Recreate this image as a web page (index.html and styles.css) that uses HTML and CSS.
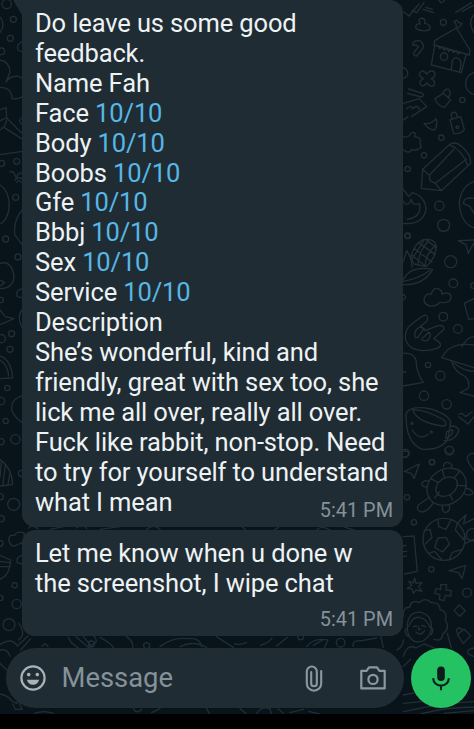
FILE: index.html
```html
<!DOCTYPE html>
<html lang="en">
<head>
<meta charset="utf-8">
<title>Chat</title>
<link rel="stylesheet" href="styles.css">
</head>
<body>
<div class="screen">
  <svg class="doodles" viewBox="0 0 474 714" aria-hidden="true">
    <g transform="translate(394 0) scale(.3333)">
      <path d="M30 36L45 48L75 12M54 30L68 38L90 8M88 28L118 38M95 22L115 28M135 0Q142 16 152 0M185 38L232 8M205 34L238 16"/>
      <path d="M66 86Q62 70 78 72Q70 56 84 54Q96 58 92 70Q110 72 108 88Q90 98 66 86Z"/>
      <circle cx="148" cy="67" r="9"/>
      <path d="M187 84L122 122L120 135L226 165L228 150ZM187 84L186 72Q175 62 184 64Q188 55 194 68Q210 68 200 76L192 84M122 138L112 195L202 218L216 165M132 137l5 9 8-6 5 10 9-6 5 10 9-6 5 10 9-6 5 10 9-6M172 207L175 182Q184 165 198 180Q204 190 197 214"/>
      <circle cx="150" cy="170" r="11"/>
      <path d="M56 134Q58 120 75 122Q90 128 88 143L68 168Q55 168 61 156L74 140Q65 132 57 136Z"/>
      <path d="M78 218Q86 206 98 222Q112 205 122 218Q126 230 112 236Q128 246 119 257Q109 263 99 249Q87 264 78 253Q76 242 88 236Q72 228 78 218Z"/>
      <path d="M28 203Q48 212 38 230L28 235M44 267L86 280Q92 288 82 291L40 280M28 310L76 296L98 320L52 350M38 326Q52 312 56 326Q72 312 76 328M28 360L42 350"/>
      <path d="M123 296L148 280L170 300L151 322Q130 318 123 296ZM146 280Q152 266 164 268Q174 280 163 292"/>
      <circle cx="205" cy="300" r="8"/><path d="M240 218Q210 228 216 262Q224 280 240 284"/>
      <path d="M90 370Q110 375 126 356Q132 374 122 390Q105 390 90 370ZM168 360L200 350L211 388Q200 404 179 400ZM174 354L171 343Q178 332 187 340L190 351"/>
      <circle cx="190" cy="382" r="4"/><circle cx="142" cy="413" r="8"/>
      <path d="M28 410Q40 414 46 406Q56 392 64 400L62 410Q84 412 78 430L82 442Q60 455 52 448Q48 464 28 450"/>
      <path d="M82 565L86 508L166 434Q184 422 204 440Q232 464 230 490L142 572ZM86 508L106 526L108 542L124 550L142 572M106 526L180 448M124 550L217 478M166 434Q206 450 222 498"/>
      <circle cx="90" cy="466" r="8"/><circle cx="41" cy="507" r="8"/>
      <path d="M28 568L44 590L55 578Q94 590 96 628Q88 674 28 671M28 604Q40 625 52 598Q55 620 76 610Q86 650 40 658"/>
      <circle cx="136" cy="617" r="14"/><circle cx="149" cy="676" r="18"/><circle cx="41" cy="707" r="8"/>
      <path d="M240 545Q200 560 196 610Q200 670 240 684M240 595Q210 590 208 610L228 620L240 640M240 45Q220 65 240 98"/>
    </g>
    <g transform="translate(394 230) scale(.3333)">
      <circle cx="41" cy="18" r="8"/><path d="M136 0Q148 8 162 0"/>
      <path d="M50 84Q58 42 88 29Q120 24 127 46Q126 84 96 110L60 102ZM60 55L114 96M74 38L124 74M92 28L128 52M52 74L92 106M72 104Q75 60 108 28M94 106Q92 76 126 44M54 88L90 30M28 94L38 62Q55 85 54 112M28 148Q50 105 116 118Q90 165 28 164M28 154Q75 145 106 122"/>
      <circle cx="170" cy="95" r="18"/><path d="M193 32L240 30M193 32L216 44L223 70L240 38"/>
      <circle cx="178" cy="160" r="13"/><circle cx="238" cy="167" r="8"/><path d="M28 193Q42 202 28 210"/>
      <path d="M108 228Q86 222 91 204Q98 188 112 193Q116 172 132 176Q146 182 143 192Q170 184 171 202Q170 218 150 218Q132 215 132 223Q118 230 108 228ZM240 206L211 220L224 268L240 266"/>
      <circle cx="148" cy="260" r="13"/><circle cx="192" cy="297" r="13"/>
      <path d="M46 289Q80 260 94 255Q108 264 95 277L78 290Q90 292 94 302L132 287Q151 284 150 298L119 326Q144 338 139 348Q130 360 88 362Q42 360 34 325Q34 300 46 289ZM63 315Q60 302 76 292Q90 290 86 302L72 322Q60 326 63 315ZM86 324L105 306Q114 318 102 330Q92 336 82 328"/>
      <path d="M28 370Q56 366 66 390Q67 430 88 457L28 468M28 426L36 426"/>
      <circle cx="102" cy="405" r="8"/><circle cx="139" cy="437" r="14"/><circle cx="90" cy="497" r="14"/><circle cx="158" cy="523" r="14"/>
      <path d="M240 345Q168 334 143 383L240 413M204 350Q220 320 240 320M172 392Q180 425 214 440Q230 456 222 476L198 488L240 498M180 400Q210 424 240 424M195 553L204 550L215 560L234 546M195 560L222 582L240 560"/>
      <path d="M36 550Q52 525 110 537Q166 555 170 578L162 626Q145 660 85 658Q34 640 36 550ZM56 540Q90 536 150 570Q164 588 146 588Q70 578 56 540ZM168 588Q196 588 194 604Q182 634 150 632M176 600L158 605L155 624Q176 620 176 600ZM55 600Q76 634 103 613"/>
      <circle cx="54" cy="580" r="3"/><circle cx="112" cy="606" r="3"/><circle cx="34" cy="670" r="12"/><circle cx="166" cy="662" r="13"/><circle cx="114" cy="696" r="8"/>
    </g>
    <g transform="translate(394 450) scale(.3333)">
      <circle cx="114" cy="37" r="8"/><circle cx="39" cy="142" r="8"/><path d="M31 64L76 42L60 86L52 70ZM28 4Q45 0 44 14Q38 24 28 22M152 0Q166 24 180 0M240 10Q210 12 225 40L240 62"/>
      <ellipse cx="158" cy="110" rx="62" ry="52" transform="rotate(-35 158 110)"/><ellipse cx="158" cy="110" rx="35" ry="26" transform="rotate(-35 158 110)"/>
      <path d="M110 85L132 98M145 60L152 84M198 62L180 85M216 108L190 106M176 150L168 134M122 144L136 126M148 50Q150 34 164 38Q178 44 172 54M100 112Q80 110 84 98Q94 88 106 94M214 114Q238 118 236 132Q222 140 208 130M146 166Q142 184 154 188Q170 184 166 166M106 142L72 166Q66 184 84 186Q104 184 118 158"/>
      <circle cx="60" cy="217" r="8"/><circle cx="150" cy="268" r="63"/>
      <path d="M132 264L156 262L166 282L146 306L122 292ZM132 208L134 230L156 238L172 208M90 242L108 238L114 262L94 282M103 310L122 304L144 330M166 328L174 308L204 298M190 220L184 240L210 270L212 250M190 220L216 194L208 222L240 206M240 235Q214 235 218 264Q225 274 240 272M214 280L240 268"/>
      <path d="M28 260L60 258L70 364L32 372M28 288L36 286M28 305L38 304M28 320L38 318M62 384L66 400L84 398L74 410L84 424L66 420L58 430L54 416L40 416L53 406L44 394L57 399ZM140 404H158L156 420L172 422L170 438L154 436L150 452L136 448L138 434L122 430L126 416L140 418Z"/>
      <circle cx="112" cy="358" r="8"/><path d="M165 362L215 346L204 386L194 368Z"/><circle cx="219" cy="428" r="13"/>
      <path d="M180 482L196 465L214 482L197 499ZM190 554L210 537L230 557L208 580ZM192 552Q182 534 198 534L206 542M240 594Q218 596 222 612L240 620"/>
      <path d="M28 500Q25 470 47 472Q50 448 76 458Q92 440 112 458Q138 456 138 478Q162 486 154 510Q170 536 146 552Q145 576 120 568M40 535Q28 538 38 556L46 558M42 550Q34 510 55 492Q80 478 104 500Q118 520 108 552Q92 578 66 576Q48 570 42 550ZM44 530Q54 500 76 502Q98 506 108 532M108 530Q122 535 112 554M58 530L68 528M84 526L94 530M66 546Q80 560 92 542M74 530L74 539L80 538M28 620Q40 580 66 594L90 582L120 594M160 550L172 594M28 570Q28 590 8 600M28 650L50 628M28 735L64 728M28 760L90 754M28 785Q150 758 240 755M80 792Q160 770 240 772M150 790L240 782"/>
    </g>
    <g transform="scale(.3333)">
      <circle cx="20" cy="12" r="14"/><circle cx="40" cy="58" r="9"/><circle cx="31" cy="115" r="9"/><circle cx="4" cy="154" r="10"/><path d="M0 52Q10 58 8 84L0 98M68 124Q48 132 54 150L68 156M0 180Q28 184 30 216L18 246Q28 228 54 228L68 236M0 262Q36 262 36 296Q50 300 68 290M0 330L18 322L20 354L0 362M20 354L68 402M20 362L12 382L68 418M10 382L0 390M0 464L68 454M66 354Q50 362 68 374"/>
      <circle cx="5" cy="490" r="9"/><circle cx="50" cy="484" r="9"/><circle cx="47" cy="592" r="9"/><circle cx="17" cy="717" r="9"/><circle cx="54" cy="771" r="9"/>
      <path d="M30 515L40 516L48 532Q60 512 68 522M44 540Q58 528 68 538M50 548Q56 534 64 548M0 555Q25 570 28 612Q26 660 0 672M68 628Q40 660 44 704L68 736M0 790Q34 780 42 828Q40 866 0 866M0 840L14 848L0 858M68 866Q45 870 52 890L68 894M0 930L16 950L42 956L0 974M68 928Q48 950 68 986"/><circle cx="2" cy="900" r="8"/><circle cx="35" cy="1001" r="9"/><circle cx="30" cy="1048" r="9"/><circle cx="4" cy="1016" r="12"/>
    </g>
    <g transform="translate(0 350) scale(.3333)">
      <path d="M0 18Q34 30 38 84L0 86M0 30Q24 46 26 78M68 136Q28 150 36 182Q46 205 68 218M0 328Q36 354 38 404L0 408M4 334L0 382M16 345L8 406M30 370L24 404"/><circle cx="22" cy="114" r="8"/><circle cx="3" cy="153" r="11"/><circle cx="17" cy="213" r="8"/><circle cx="46" cy="268" r="14"/><circle cx="3" cy="275" r="9"/><circle cx="64" cy="370" r="9"/><circle cx="41" cy="463" r="18"/><circle cx="1" cy="440" r="9"/><circle cx="4" cy="506" r="9"/>
    </g>
    <g transform="translate(0 500) scale(.3333)">
      <path d="M34 137Q20 118 32 106L44 106Q50 92 72 98L74 124L44 138ZM0 166L32 180Q30 225 0 238M0 184L30 188M0 200L28 200M66 166Q46 172 52 188L66 192"/><circle cx="44" cy="256" r="8"/><circle cx="50" cy="312" r="14"/><circle cx="27" cy="374" r="18"/><circle cx="0" cy="130" r="9"/><circle cx="1" cy="294" r="8"/>
      <path d="M0 434Q36 410 52 438L84 408M62 450L92 416M56 370Q80 400 56 420M0 450Q24 445 30 470M0 490L20 510M0 582Q25 586 34 602L50 610L54 600L66 628L46 628L38 612M126 440Q135 424 144 440M204 412L216 430L240 448M228 410L270 446M250 410L276 440M282 408Q300 430 270 436M300 412Q335 430 344 448M380 410Q402 425 398 444M480 440Q520 410 560 416Q600 410 605 440M540 440Q580 420 620 442M650 410L700 442M86 84Q94 72 114 86M150 88L190 80M230 84L248 72L260 86M300 88L360 80M440 88Q460 70 480 88M104 640Q130 630 160 640M400 626Q410 644 426 628M455 638L480 626M620 626L630 644"/><circle cx="274" cy="432" r="9"/><circle cx="440" cy="437" r="9"/>
    </g>
    <g transform="translate(230 490) scale(.3333)">
      <path d="M14 462Q30 466 50 458M92 466Q120 456 126 444M140 468L172 442M230 470Q250 442 294 450L284 472M250 466L278 450M370 470Q364 450 396 452L440 444M452 438L460 472M30 656L50 672M80 670Q95 648 120 656L124 672M144 656L160 670M180 668L220 658M236 664L268 672M36 110L50 122M130 122L146 112M260 120Q275 104 300 120M340 110L376 122"/><circle cx="212" cy="440" r="9"/><circle cx="332" cy="458" r="13"/>
    </g>
  </svg>

  <main class="chat">
    <section class="bubble first">
      <p class="text">Do leave us some good<br>feedback.<br>Name Fah<br>Face <a>10/10</a><br>Body <a>10/10</a><br>Boobs <a>10/10</a><br>Gfe <a>10/10</a><br>Bbbj <a>10/10</a><br>Sex <a>10/10</a><br>Service <a>10/10</a><br>Description<br>She’s wonderful, kind and<br>friendly, great with sex too, she<br>lick me all over, really all over.<br>Fuck like rabbit, non-stop. Need<br>to try for yourself to understand<br>what I mean</p>
      <time class="time">5:41 PM</time>
    </section>
    <section class="bubble second">
      <p class="text">Let me know when u done w<br>the screenshot, I wipe chat</p>
      <time class="time">5:41 PM</time>
    </section>
  </main>

  <footer class="composer">
    <div class="field">
      <svg class="smile" viewBox="0 0 26 26"><circle cx="13" cy="13" r="11.6" fill="none" stroke="currentColor" stroke-width="2.2"/><circle cx="8.7" cy="9.6" r="1.8"/><circle cx="17.3" cy="9.6" r="1.8"/><path d="M6.8 14.7H19.2Q17.6 19.7 13 19.7T6.8 14.7Z"/></svg>
      <span class="placeholder">Message</span>
      <svg class="clip" viewBox="0 0 18 27"><path d="M16.2 6V18.5A7.2 7.2 0 0 1 1.8 18.5V6.5A5 5 0 0 1 11.8 6.5V18.5A2.8 2.8 0 0 1 6.2 18.5V7" fill="none" stroke="currentColor" stroke-width="2.1" stroke-linecap="round"/></svg>
      <svg class="camera" viewBox="0 0 26 24"><path d="M1.3 4.8H6.6L9 1.4H17L19.4 4.8H24.7V22.4H1.3Z" fill="none" stroke="currentColor" stroke-width="2.2" stroke-linejoin="round"/><circle cx="13" cy="13.4" r="4.6" fill="none" stroke="currentColor" stroke-width="2.2"/></svg>
    </div>
    <div class="mic">
      <svg viewBox="0 0 18 25"><rect x="5.2" y="0.4" width="7.6" height="14.6" rx="3.8"/><path d="M1.2 12.2A7.8 7.4 0 0 0 16.8 12.2M9 19.5V24.2" fill="none" stroke="currentColor" stroke-width="2.1"/></svg>
    </div>
  </footer>
</div>
</body>
</html>
```
FILE: styles.css
```css
* { box-sizing: border-box; }
body {
  margin: 0;
  background: #000;
  font-family: Roboto, "Liberation Sans", sans-serif;
}
.screen {
  position: relative;
  width: 474px;
  height: 714px;
  overflow: hidden;
  background: #08131a;
  display: flex;
  flex-direction: column;
}
.doodles {
  position: absolute;
  inset: 0;
  width: 474px;
  height: 714px;
  fill: none;
  stroke: #222e36;
  stroke-width: 4;
  stroke-linejoin: round;
  stroke-linecap: round;
}
.chat {
  position: relative;
  display: flex;
  flex-direction: column;
  gap: 3px;
  padding: 0 71px 0 22px;
}
.bubble {
  position: relative;
  display: flex;
  flex-direction: column;
  background: #202c33;
  border-radius: 13px;
  padding: 0 10px 0 13px;
}
.first {
  height: 527px;
  padding-top: 9px;
  border-top-left-radius: 0;
}
.first::before {
  content: "";
  position: absolute;
  left: -9px;
  top: 0;
  width: 9px;
  height: 15px;
  background: #202c33;
  clip-path: polygon(0 0, 100% 0, 100% 100%);
}
.second {
  height: 106px;
  padding-top: 9px;
}
.text {
  margin: 0;
  color: #edf2f4;
  font-size: 25.5px;
  letter-spacing: -0.13px;
  line-height: 29.9px;
  white-space: nowrap;
}
.text a { color: #57b7e6; }
.time {
  position: absolute;
  right: 10px;
  bottom: 4px;
  color: #84929a;
  font-size: 19.9px;
  line-height: 24px;
}
.composer {
  position: relative;
  display: flex;
  align-items: center;
  gap: 6.5px;
  margin-top: 12px;
  padding-left: 6px;
}
.field {
  display: flex;
  align-items: center;
  width: 398px;
  height: 60px;
  padding: 0 18px 0 14px;
  border-radius: 30px;
  background: #202c33;
  color: #8b989f;
}
.field svg { fill: currentColor; flex: none; }
.smile { width: 26px; height: 26px; color: #a9b2b7; }
.placeholder {
  flex: 1;
  margin-left: 15.5px;
  font-size: 27.4px;
  color: #84929a;
}
.clip { width: 18px; height: 27px; margin-right: 37px; }
.camera { width: 26px; height: 24px; }
.mic {
  display: flex;
  align-items: center;
  justify-content: center;
  width: 60px;
  height: 60px;
  border-radius: 50%;
  background: #25c263;
  color: #0c1b1b;
}
.mic svg { width: 18px; height: 25px; fill: currentColor; }
```
